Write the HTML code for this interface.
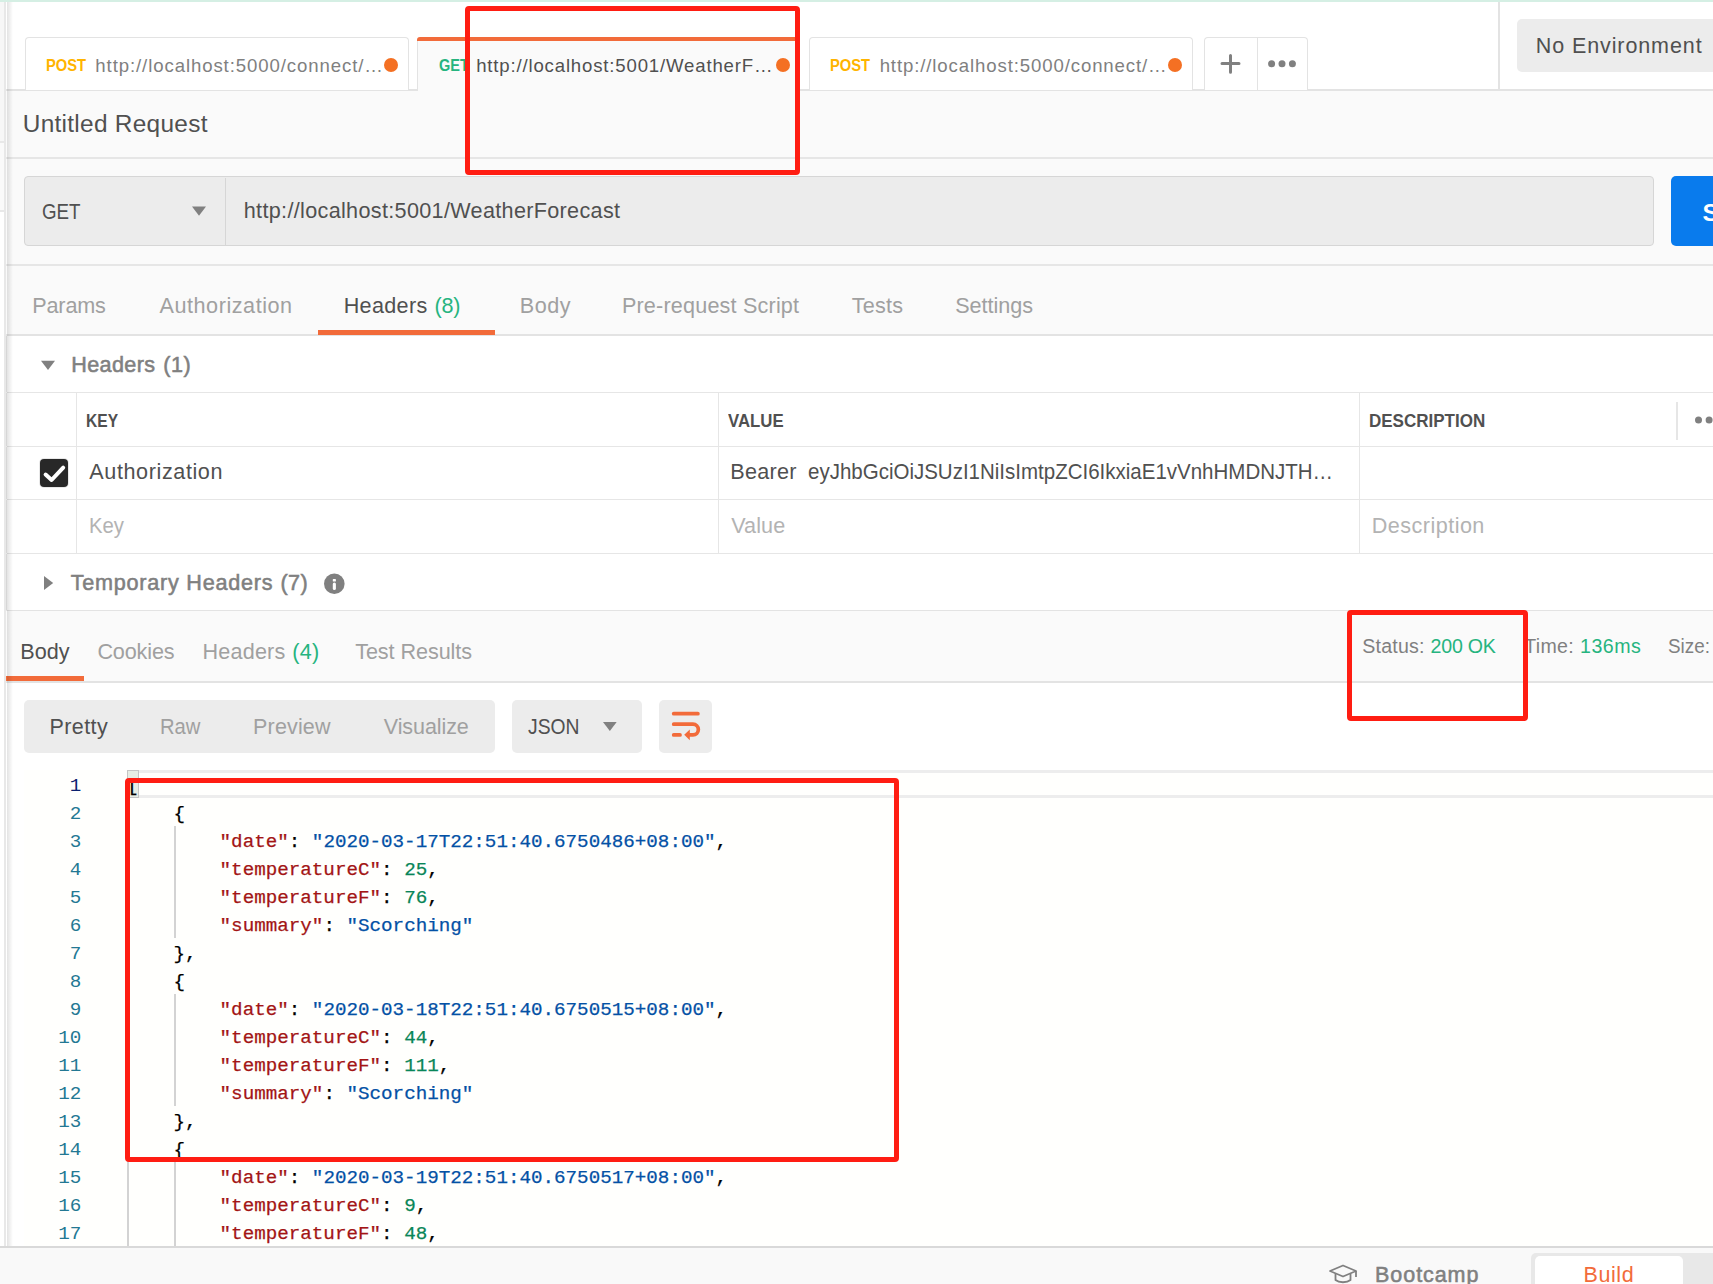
<!DOCTYPE html>
<html><head><meta charset="utf-8">
<style>
html,body{margin:0;padding:0;}
body{width:1713px;height:1284px;position:relative;overflow:hidden;background:#fff;font-family:"Liberation Sans",sans-serif;}
.a{position:absolute;}
.t{position:absolute;white-space:pre;line-height:1;}
.cl{position:absolute;left:127.3px;white-space:pre;font-family:"Liberation Mono",monospace;font-size:19.239px;line-height:28px;color:#000;-webkit-text-stroke:0.25px currentColor;}
.ln{position:absolute;left:40px;width:41.4px;text-align:right;white-space:pre;font-family:"Liberation Mono",monospace;font-size:19.239px;line-height:28px;color:#237893;}
.ln.act{color:#0b216f;}
.k{color:#a31515}.s{color:#0451a5}.n{color:#098658}.p{color:#000}
.ig{position:absolute;width:2px;background:#d3d3d3;}
.red{position:absolute;border:5px solid #ff1d12;border-radius:4px;box-sizing:border-box;}
.tab{position:absolute;top:37px;height:53px;background:#fff;border:1.5px solid #e3e3e3;border-bottom:none;border-radius:4px 4px 0 0;box-sizing:border-box;}
.dot{position:absolute;width:14px;height:14px;border-radius:50%;background:#f47023;top:58px;}
.hl{position:absolute;height:1.5px;background:#e6e6e6;}
</style></head><body>
<!-- top teal strip -->
<div class="a" style="left:0;top:0;width:1713px;height:2px;background:#d5efe4"></div>
<!-- left sidebar strip -->
<div class="a" style="left:0;top:2px;width:3.8px;height:139px;background:#f7f7f7"></div>
<div class="a" style="left:0;top:141px;width:3.8px;height:1.5px;background:#e8e8e8"></div>
<div class="a" style="left:0;top:142.5px;width:3.8px;height:68px;background:#fafafa"></div>
<div class="a" style="left:0;top:210px;width:3.8px;height:1.5px;background:#e8e8e8"></div>
<div class="a" style="left:3.8px;top:2px;width:2.3px;height:1244px;background:#e8e8e8"></div>
<div class="a" style="left:6.1px;top:2px;width:0.9px;height:1244px;background:#d6d6d6"></div>

<!-- main area -->
<div class="a" style="left:6px;top:2px;width:1707px;height:88px;background:#fff"></div>
<div class="a" style="left:6px;top:89px;width:1707px;height:1.6px;background:#e3e3e3"></div>
<div class="a" style="left:6px;top:90.6px;width:1707px;height:67px;background:#fafafa"></div>
<div class="hl" style="left:6px;top:157.2px;width:1707px;height:1.6px"></div>
<div class="a" style="left:6px;top:158.8px;width:1707px;height:105.4px;background:#fafafa"></div>
<div class="hl" style="left:6px;top:264.2px;width:1707px;height:1.6px"></div>
<div class="a" style="left:6px;top:265.8px;width:1707px;height:68.2px;background:#fafafa"></div>
<div class="a" style="left:6px;top:334px;width:1707px;height:1.6px;background:#e3e3e3"></div>

<!-- tabs -->
<div class="tab" style="left:25px;width:384px"></div>
<div class="tab" style="left:416.5px;width:383px;background:#fafafa;border-top:none;height:54px"></div>
<div class="a" style="left:416.5px;top:37px;width:383px;height:4px;background:#f26b3a;border-radius:3px 3px 0 0"></div>
<div class="tab" style="left:808.5px;width:384px"></div>
<div class="dot" style="left:383.8px"></div>
<div class="dot" style="left:775.8px"></div>
<div class="dot" style="left:1168px"></div>
<div class="tab" style="left:1203.5px;width:104px"></div>
<div class="a" style="left:1256.5px;top:38px;width:1.6px;height:52px;background:#e3e3e3"></div>
<svg class="a" style="left:1204px;top:38px" width="104" height="52">
 <path d="M26.5 17.4 V34.2 M18 25.4 H35" stroke="#808080" stroke-width="3" stroke-linecap="round" fill="none"/>
 <circle cx="67.6" cy="25.8" r="3.5" fill="#808080"/><circle cx="78" cy="25.8" r="3.5" fill="#808080"/><circle cx="88.4" cy="25.8" r="3.5" fill="#808080"/>
</svg>
<div class="a" style="left:1498px;top:2px;width:1.6px;height:87px;background:#e3e3e3"></div>
<div class="a" style="left:1517px;top:19px;width:220px;height:53px;background:#ececec;border-radius:5px"></div>

<!-- URL bar -->
<div class="a" style="left:24.3px;top:176.3px;width:1629.9px;height:69.3px;background:#ececec;border:1.4px solid #d6d6d6;border-radius:4px;box-sizing:border-box"></div>
<div class="a" style="left:224.8px;top:177.5px;width:1.4px;height:67px;background:#d6d6d6"></div>
<svg class="a" style="left:190px;top:204px" width="20" height="14"><path d="M2 2.4 H16 L9 11.8 Z" fill="#808080"/></svg>
<div class="a" style="left:1671px;top:176.2px;width:60px;height:69.6px;background:#097bed;border-radius:5px"></div>

<!-- request tab underline -->
<div class="a" style="left:318px;top:330px;width:177px;height:5px;background:#f26b3a"></div>

<!-- headers section -->
<svg class="a" style="left:38px;top:358px" width="20" height="16"><path d="M3 2.7 H17 L10 12.1 Z" fill="#808080"/></svg>
<div class="a" style="left:6px;top:391.6px;width:1707px;height:1.4px;background:#e6e6e6"></div>
<div class="a" style="left:6px;top:445.8px;width:1707px;height:1.4px;background:#e6e6e6"></div>
<div class="a" style="left:6px;top:499px;width:1707px;height:1.4px;background:#e6e6e6"></div>
<div class="a" style="left:6px;top:552.6px;width:1707px;height:1.4px;background:#e6e6e6"></div>
<div class="a" style="left:75.9px;top:393px;width:1.4px;height:160px;background:#e6e6e6"></div>
<div class="a" style="left:717.7px;top:393px;width:1.4px;height:160px;background:#e6e6e6"></div>
<div class="a" style="left:1358.8px;top:393px;width:1.4px;height:160px;background:#e6e6e6"></div>
<div class="a" style="left:1676px;top:402px;width:1.6px;height:38.4px;background:#e6e6e6"></div>
<svg class="a" style="left:1690px;top:412px" width="23" height="16"><circle cx="8.5" cy="8.1" r="3.5" fill="#808080"/><circle cx="19.1" cy="8.1" r="3.5" fill="#808080"/></svg>
<!-- checkbox -->
<div class="a" style="left:39.6px;top:458.6px;width:28.8px;height:28.4px;background:#282828;border-radius:4px;box-shadow:0 0 0 1px #e8e8e8"></div>
<svg class="a" style="left:39.6px;top:458.6px" width="29" height="29"><path d="M5.6 15.6 L11.6 21 L23.2 8.6" stroke="#fff" stroke-width="4" fill="none" stroke-linecap="round" stroke-linejoin="round"/></svg>
<!-- temporary headers -->
<svg class="a" style="left:40px;top:574px" width="16" height="20"><path d="M4 2 V16 L13.2 9 Z" fill="#808080"/></svg>
<svg class="a" style="left:323px;top:572.5px" width="23" height="23"><circle cx="11.3" cy="10.7" r="10.3" fill="#808080"/><rect x="9.8" y="9.6" width="3.1" height="7.4" rx="1.5" fill="#fff"/><rect x="9.8" y="6.1" width="3.1" height="2.5" rx="0.6" fill="#fff"/></svg>

<!-- response header -->
<div class="a" style="left:6px;top:609.6px;width:1707px;height:1.6px;background:#e3e3e3"></div>
<div class="a" style="left:6px;top:611.2px;width:1707px;height:70px;background:#fafafa"></div>
<div class="a" style="left:6px;top:681.2px;width:1707px;height:1.6px;background:#e3e3e3"></div>
<div class="a" style="left:6px;top:676px;width:78px;height:5px;background:#f26b3a"></div>

<div class="a" style="left:6px;top:682.8px;width:1707px;height:563.2px;background:#fff"></div>
<!-- format toolbar -->
<div class="a" style="left:24.1px;top:700.1px;width:470.6px;height:52.7px;background:#ececec;border-radius:5px"></div>
<div class="a" style="left:512px;top:700.1px;width:129.6px;height:52.7px;background:#ececec;border-radius:5px"></div>
<svg class="a" style="left:600px;top:718px" width="20" height="16"><path d="M3 4 H16.7 L9.85 13 Z" fill="#808080"/></svg>
<div class="a" style="left:659.2px;top:700.1px;width:52.6px;height:52.7px;background:#ececec;border-radius:5px"></div>
<svg class="a" style="left:659.2px;top:700px" width="53" height="53">
 <g stroke="#f26b3a" stroke-width="3.7" stroke-linecap="round" fill="none">
  <path d="M14.7 13.7 H38.9"/>
  <path d="M14.7 24.2 H34 A5.35 5.35 0 0 1 34 34.9 H29"/>
  <path d="M14.7 34.9 H21"/>
 </g>
 <path d="M25.2 34.8 L30.8 29.4 V40.2 Z" fill="#f26b3a"/>
</svg>

<!-- editor -->
<div class="a" style="left:24px;top:770px;width:1689px;height:476px;background:#fffffd"></div>
<div class="a" style="left:127px;top:770px;width:1586px;height:28px;background:#fffffd;border-top:3.4px solid #ededed;border-bottom:3.4px solid #ededed;box-sizing:border-box"></div>
<div class="a" style="left:127px;top:770px;width:11.8px;height:28px;background:#e7ede4;border:1.5px solid #c4c4c4;box-sizing:border-box"></div>
<div class="ig" style="left:127.3px;top:798px;height:448px"></div>
<div class="ig" style="left:173.5px;top:826px;height:112px"></div>
<div class="ig" style="left:173.5px;top:994px;height:112px"></div>
<div class="ig" style="left:173.5px;top:1162px;height:84px"></div>
<div class="ln act" style="top:771.78px">1</div>
<div class="ln" style="top:799.78px">2</div>
<div class="ln" style="top:827.78px">3</div>
<div class="ln" style="top:855.78px">4</div>
<div class="ln" style="top:883.78px">5</div>
<div class="ln" style="top:911.78px">6</div>
<div class="ln" style="top:939.78px">7</div>
<div class="ln" style="top:967.78px">8</div>
<div class="ln" style="top:995.78px">9</div>
<div class="ln" style="top:1023.78px">10</div>
<div class="ln" style="top:1051.78px">11</div>
<div class="ln" style="top:1079.78px">12</div>
<div class="ln" style="top:1107.78px">13</div>
<div class="ln" style="top:1135.78px">14</div>
<div class="ln" style="top:1163.78px">15</div>
<div class="ln" style="top:1191.78px">16</div>
<div class="ln" style="top:1219.78px">17</div>
<div class="cl" style="top:771.78px"><span class="p">[</span></div>
<div class="cl" style="top:799.78px">    <span class="p">{</span></div>
<div class="cl" style="top:827.78px">        <span class="k">&quot;date&quot;</span><span class="p">:</span> <span class="s">&quot;2020-03-17T22:51:40.6750486+08:00&quot;</span><span class="p">,</span></div>
<div class="cl" style="top:855.78px">        <span class="k">&quot;temperatureC&quot;</span><span class="p">:</span> <span class="n">25</span><span class="p">,</span></div>
<div class="cl" style="top:883.78px">        <span class="k">&quot;temperatureF&quot;</span><span class="p">:</span> <span class="n">76</span><span class="p">,</span></div>
<div class="cl" style="top:911.78px">        <span class="k">&quot;summary&quot;</span><span class="p">:</span> <span class="s">&quot;Scorching&quot;</span></div>
<div class="cl" style="top:939.78px">    <span class="p">}</span><span class="p">,</span></div>
<div class="cl" style="top:967.78px">    <span class="p">{</span></div>
<div class="cl" style="top:995.78px">        <span class="k">&quot;date&quot;</span><span class="p">:</span> <span class="s">&quot;2020-03-18T22:51:40.6750515+08:00&quot;</span><span class="p">,</span></div>
<div class="cl" style="top:1023.78px">        <span class="k">&quot;temperatureC&quot;</span><span class="p">:</span> <span class="n">44</span><span class="p">,</span></div>
<div class="cl" style="top:1051.78px">        <span class="k">&quot;temperatureF&quot;</span><span class="p">:</span> <span class="n">111</span><span class="p">,</span></div>
<div class="cl" style="top:1079.78px">        <span class="k">&quot;summary&quot;</span><span class="p">:</span> <span class="s">&quot;Scorching&quot;</span></div>
<div class="cl" style="top:1107.78px">    <span class="p">}</span><span class="p">,</span></div>
<div class="cl" style="top:1135.78px">    <span class="p">{</span></div>
<div class="cl" style="top:1163.78px">        <span class="k">&quot;date&quot;</span><span class="p">:</span> <span class="s">&quot;2020-03-19T22:51:40.6750517+08:00&quot;</span><span class="p">,</span></div>
<div class="cl" style="top:1191.78px">        <span class="k">&quot;temperatureC&quot;</span><span class="p">:</span> <span class="n">9</span><span class="p">,</span></div>
<div class="cl" style="top:1219.78px">        <span class="k">&quot;temperatureF&quot;</span><span class="p">:</span> <span class="n">48</span><span class="p">,</span></div>

<!-- status bar -->
<div class="a" style="left:0;top:1246px;width:1713px;height:1.8px;background:#d9d9d9"></div>
<div class="a" style="left:0;top:1247.8px;width:1713px;height:37px;background:#f9f9f9"></div>
<svg class="a" style="left:1328px;top:1263px" width="32" height="22"><g stroke="#808080" stroke-width="1.8" fill="none" stroke-linejoin="round"><path d="M2 8 L15 2.5 L28 8 L15 13.5 Z"/><path d="M7.5 10.5 V17 C11 20 19 20 22.5 17 V10.5"/><path d="M28 8 V14"/></g></svg>
<div class="a" style="left:1531px;top:1253px;width:182px;height:40px;background:#e8e8e8;border-radius:5px 0 0 0"></div>
<div class="a" style="left:1535.2px;top:1256px;width:148px;height:40px;background:#fff;border-radius:5px"></div>

<!-- shadow on left of main -->
<div class="a" style="left:7px;top:2px;width:6px;height:1244px;background:linear-gradient(to right,rgba(0,0,0,0.11),rgba(0,0,0,0))"></div>

<div class="t" style="left:46.18px;top:57.00px;font-size:17.30px;transform:scaleX(0.8523);transform-origin:0 0;font-weight:700;color:#ffb400">POST</div>
<div class="t" style="left:95.34px;top:57.00px;font-size:18.60px;letter-spacing:0.904px;font-weight:400;color:#808080">http://localhost:5000/connect/…</div>
<div class="t" style="left:438.65px;top:57.00px;font-size:17.30px;transform:scaleX(0.8401);transform-origin:0 0;font-weight:700;color:#26b47f">GET</div>
<div class="t" style="left:476.14px;top:57.00px;font-size:18.60px;letter-spacing:0.831px;font-weight:400;color:#505050">http://localhost:5001/WeatherF…</div>
<div class="t" style="left:830.08px;top:57.00px;font-size:17.30px;transform:scaleX(0.8523);transform-origin:0 0;font-weight:700;color:#ffb400">POST</div>
<div class="t" style="left:879.64px;top:57.00px;font-size:18.60px;letter-spacing:0.887px;font-weight:400;color:#808080">http://localhost:5000/connect/…</div>
<div class="t" style="left:1535.72px;top:36.00px;font-size:21.50px;letter-spacing:0.904px;font-weight:400;color:#505050">No Environment</div>
<div class="t" style="left:22.78px;top:112.00px;font-size:24.40px;letter-spacing:0.290px;font-weight:400;color:#505050">Untitled Request</div>
<div class="t" style="left:42.22px;top:201.00px;font-size:21.20px;transform:scaleX(0.8834);transform-origin:0 0;font-weight:400;color:#505050">GET</div>
<div class="t" style="left:243.75px;top:200.00px;font-size:21.60px;letter-spacing:0.327px;font-weight:400;color:#505050">http://localhost:5001/WeatherForecast</div>
<div class="t" style="left:1702.42px;top:201.00px;font-size:24.50px;letter-spacing:0.000px;font-weight:700;color:#ffffff">S</div>
<div class="t" style="left:32.31px;top:295.00px;font-size:21.60px;letter-spacing:-0.171px;font-weight:400;color:#a0a0a0">Params</div>
<div class="t" style="left:159.50px;top:295.00px;font-size:21.60px;letter-spacing:0.545px;font-weight:400;color:#a0a0a0">Authorization</div>
<div class="t" style="left:343.71px;top:295.00px;font-size:21.60px;letter-spacing:0.320px;font-weight:400;color:#505050">Headers</div>
<div class="t" style="left:434.39px;top:295.00px;font-size:21.60px;letter-spacing:-0.184px;font-weight:400;color:#26b47f">(8)</div>
<div class="t" style="left:519.81px;top:295.00px;font-size:21.60px;letter-spacing:0.518px;font-weight:400;color:#a0a0a0">Body</div>
<div class="t" style="left:621.91px;top:295.00px;font-size:21.60px;letter-spacing:0.185px;font-weight:400;color:#a0a0a0">Pre-request Script</div>
<div class="t" style="left:851.86px;top:295.00px;font-size:21.60px;letter-spacing:0.175px;font-weight:400;color:#a0a0a0">Tests</div>
<div class="t" style="left:955.23px;top:295.00px;font-size:21.60px;letter-spacing:-0.028px;font-weight:400;color:#a0a0a0">Settings</div>
<div class="t" style="left:71.21px;top:354.00px;font-size:21.60px;letter-spacing:0.387px;font-weight:400;color:#808080;-webkit-text-stroke:0.55px #808080">Headers</div>
<div class="t" style="left:163.29px;top:354.00px;font-size:21.60px;letter-spacing:0.466px;font-weight:400;color:#808080;-webkit-text-stroke:0.55px #808080">(1)</div>
<div class="t" style="left:86.33px;top:412.00px;font-size:18.70px;transform:scaleX(0.8333);transform-origin:0 0;font-weight:700;color:#505050">KEY</div>
<div class="t" style="left:728.00px;top:412.00px;font-size:18.70px;transform:scaleX(0.8976);transform-origin:0 0;font-weight:700;color:#505050">VALUE</div>
<div class="t" style="left:1368.84px;top:412.00px;font-size:18.70px;transform:scaleX(0.9099);transform-origin:0 0;font-weight:700;color:#505050">DESCRIPTION</div>
<div class="t" style="left:89.30px;top:461.00px;font-size:21.60px;letter-spacing:0.595px;font-weight:400;color:#505050">Authorization</div>
<div class="t" style="left:730.31px;top:461.00px;font-size:21.60px;letter-spacing:0.252px;font-weight:400;color:#505050">Bearer</div>
<div class="t" style="left:807.96px;top:461.00px;font-size:21.60px;transform:scaleX(0.9492);transform-origin:0 0;font-weight:400;color:#505050">eyJhbGciOiJSUzI1NiIsImtpZCI6IkxiaE1vVnhHMDNJTH…</div>
<div class="t" style="left:89.41px;top:515.00px;font-size:21.60px;transform:scaleX(0.9400);transform-origin:0 0;font-weight:400;color:#b3b3b3">Key</div>
<div class="t" style="left:731.20px;top:515.00px;font-size:21.60px;letter-spacing:0.108px;font-weight:400;color:#b3b3b3">Value</div>
<div class="t" style="left:1371.81px;top:515.00px;font-size:21.60px;letter-spacing:0.456px;font-weight:400;color:#b3b3b3">Description</div>
<div class="t" style="left:70.66px;top:572.00px;font-size:21.60px;letter-spacing:0.765px;font-weight:400;color:#808080;-webkit-text-stroke:0.55px #808080">Temporary Headers</div>
<div class="t" style="left:280.49px;top:572.00px;font-size:21.60px;letter-spacing:0.416px;font-weight:400;color:#808080;-webkit-text-stroke:0.55px #808080">(7)</div>
<div class="t" style="left:20.31px;top:641.00px;font-size:21.60px;letter-spacing:-0.015px;font-weight:400;color:#505050">Body</div>
<div class="t" style="left:97.39px;top:641.00px;font-size:21.60px;letter-spacing:-0.125px;font-weight:400;color:#a0a0a0">Cookies</div>
<div class="t" style="left:202.61px;top:641.00px;font-size:21.60px;letter-spacing:0.170px;font-weight:400;color:#a0a0a0">Headers</div>
<div class="t" style="left:292.29px;top:641.00px;font-size:21.60px;letter-spacing:0.316px;font-weight:400;color:#26b47f">(4)</div>
<div class="t" style="left:355.16px;top:641.00px;font-size:21.60px;letter-spacing:-0.066px;font-weight:400;color:#a0a0a0">Test Results</div>
<div class="t" style="left:1362.19px;top:637.00px;font-size:19.60px;letter-spacing:0.229px;font-weight:400;color:#808080">Status:</div>
<div class="t" style="left:1430.58px;top:637.00px;font-size:19.60px;letter-spacing:-0.227px;font-weight:400;color:#26b47f">200 OK</div>
<div class="t" style="left:1524.19px;top:637.00px;font-size:19.60px;letter-spacing:0.326px;font-weight:400;color:#808080">Time:</div>
<div class="t" style="left:1580.08px;top:637.00px;font-size:19.60px;letter-spacing:0.452px;font-weight:400;color:#26b47f">136ms</div>
<div class="t" style="left:1667.81px;top:637.00px;font-size:19.60px;transform:scaleX(0.9614);transform-origin:0 0;font-weight:400;color:#808080">Size:</div>
<div class="t" style="left:49.42px;top:717.00px;font-size:21.50px;letter-spacing:0.425px;font-weight:400;color:#505050">Pretty</div>
<div class="t" style="left:160.42px;top:717.00px;font-size:21.50px;transform:scaleX(0.9401);transform-origin:0 0;font-weight:400;color:#a0a0a0">Raw</div>
<div class="t" style="left:253.12px;top:717.00px;font-size:21.50px;letter-spacing:0.142px;font-weight:400;color:#a0a0a0">Preview</div>
<div class="t" style="left:383.80px;top:717.00px;font-size:21.50px;letter-spacing:-0.085px;font-weight:400;color:#a0a0a0">Visualize</div>
<div class="t" style="left:528.00px;top:717.00px;font-size:21.50px;transform:scaleX(0.8977);transform-origin:0 0;font-weight:400;color:#505050">JSON</div>
<div class="t" style="left:1375.12px;top:1265.00px;font-size:21.50px;letter-spacing:0.921px;font-weight:400;color:#808080;-webkit-text-stroke:0.55px #808080">Bootcamp</div>
<div class="t" style="left:1583.62px;top:1265.00px;font-size:21.50px;letter-spacing:0.545px;font-weight:400;color:#f26b3a">Build</div>

<!-- red annotation boxes -->
<div class="red" style="left:465px;top:6px;width:335px;height:169px"></div>
<div class="red" style="left:1347px;top:610px;width:181px;height:111px"></div>
<div class="red" style="left:125px;top:778px;width:774px;height:384px"></div>
</body></html>
